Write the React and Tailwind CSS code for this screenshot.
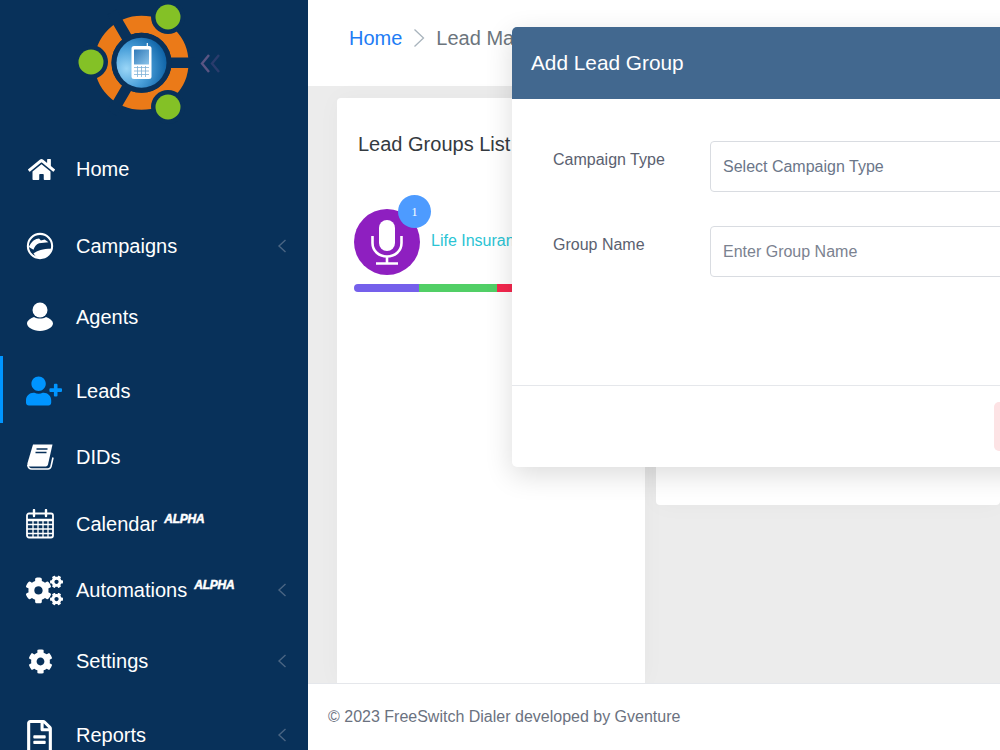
import React from "react";
import { FaHome, FaUserPlus, FaCogs, FaCog, FaRegFileAlt } from "react-icons/fa";

const Chevron = () => (
  <svg width="10" height="16" viewBox="0 0 10 16" className="absolute right-[21px] top-1/2 -translate-y-1/2" fill="none" stroke="#4a6583" strokeWidth="1.4">
    <path d="M8.500 2 2 8l6.500 6" />
  </svg>
);

const Alpha = () => (
  <span className="ml-[7px] -mt-[11px] text-[12px] leading-none font-bold italic tracking-[-0.2px] text-white [-webkit-text-stroke:0.5px_white]">ALPHA</span>
);

const Logo = () => (
  <svg width="160" height="135" viewBox="70 0 160 135" className="ml-[70px] block">
    <defs>
      <radialGradient id="ball" cx="20%" cy="62%" r="90%">
        <stop offset="0%" stopColor="#9ad6f7" />
        <stop offset="45%" stopColor="#4aa0da" />
        <stop offset="100%" stopColor="#03579c" />
      </radialGradient>
      <linearGradient id="screen" x1="0" y1="0" x2="1" y2="1">
        <stop offset="0%" stopColor="#2f79b8" />
        <stop offset="100%" stopColor="#8cc4ea" />
      </linearGradient>
    </defs>
    <circle cx="141.500" cy="62.700" r="38.500" fill="none" stroke="#eb7a18" strokeWidth="17" />
    <path d="M141.500 62.700H195M141.500 62.700 112 12M141.500 62.700 112 113" stroke="#08315a" strokeWidth="10.500" fill="none" />
    <circle cx="168" cy="17" r="17" fill="#08315a" />
    <circle cx="91" cy="62" r="17" fill="#08315a" />
    <circle cx="168" cy="107" r="17" fill="#08315a" />
    <circle cx="168" cy="17" r="12.500" fill="#84c126" />
    <circle cx="91" cy="62" r="12.500" fill="#84c126" />
    <circle cx="168" cy="107" r="12.500" fill="#84c126" />
    <circle cx="141.500" cy="62.700" r="30" fill="#08315a" />
    <circle cx="141.500" cy="62.700" r="25" fill="url(#ball)" />
    <path d="M147.300 47v-4" stroke="#fff" strokeWidth="1.200" />
    <rect x="131.500" y="46" width="20" height="33" rx="2.500" fill="#fff" />
    <rect x="134" y="49.500" width="15" height="15" rx="0.500" fill="url(#screen)" />
    <path d="M134 67.500h15M134 71h15M134 74.500h15M137.500 66v11M141.500 66v11M145.500 66v11" stroke="#7fb2d8" strokeWidth="0.800" />
    <path d="M209 55 202 63.500 209 72" fill="none" stroke="#5a5583" strokeWidth="2.400" />
    <path d="M219 55 212 63.500 219 72" fill="none" stroke="#2a3c6c" strokeWidth="2.400" />
  </svg>
);

const CampaignIcon = () => (
  <svg width="30" height="30" viewBox="0 0 30 30">
    <circle cx="15" cy="15" r="13" fill="#08315a" stroke="#fff" strokeWidth="2.200" />
    <path d="M3 16C6 10 10 7 14 7l2 2 4-1 4 3-10 1c-3 1-5 4-6 7Z" fill="#fff" />
    <path d="M8 23c4-3 10-5 19-5-1 6-6 10-12 10-3 0-5-2-7-5Z" fill="#fff" />
  </svg>
);

const AgentIcon = () => (
  <svg width="28" height="30" viewBox="0 0 28 30" fill="#fff">
    <circle cx="14" cy="8" r="7.500" />
    <path d="M1 21.500c0-3 4-5.500 7-6.500 3.500 2 8.500 2 12 0 3 1 7 3.500 7 6.500 0 3.500-6 7.500-13 7.500S1 25 1 21.500Z" />
  </svg>
);

const BookIcon = () => (
  <svg width="28" height="28" viewBox="0 0 28 28">
    <path d="M7 1.500h19.500L22 21.500c-.500 1.500-1.500 2-3 2H3.500C1.500 23.500 1 22 1.500 20L7 1.500Z" fill="#fff" />
    <path d="M1.800 22c.3 3 1.700 4 4 4H22c1.500 0 2.500-1 3-2.500l2-9" fill="none" stroke="#fff" strokeWidth="1.600" />
    <path d="M10.500 6h11M9.500 9.500h11" stroke="#08315a" strokeWidth="1.500" />
  </svg>
);

const CalendarIcon = () => (
  <svg width="28" height="30" viewBox="0 0 28 30" fill="none" stroke="#fff">
    <rect x="1" y="4.500" width="26" height="24" rx="2" strokeWidth="1.800" />
    <path d="M1 11h26" strokeWidth="2.500" />
    <path d="M1 15.500h26M1 20h26M1 24.500h26M7 11v17M12 11v17M17 11v17M22 11v17" strokeWidth="1.300" />
    <path d="M8 1v6M20 1v6" strokeWidth="2.400" strokeLinecap="round" />
  </svg>
);

const items = [
  { label: "Home", h: "h-[68px]", icon: <FaHome className="shrink-0 text-[27px] text-white ml-[3px]" /> },
  { label: "Campaigns", h: "h-[86px]", icon: <CampaignIcon />, arrow: true },
  { label: "Agents", h: "h-[56px]", icon: <AgentIcon /> },
  { label: "Leads", h: "h-[67px] mt-[11px] pt-[3px]", active: true, icon: <FaUserPlus className="shrink-0 text-[36px] text-[#0095ff] ml-[8px]" /> },
  { label: "DIDs", h: "h-[68px]", icon: <BookIcon /> },
  { label: "Calendar", h: "h-[66px]", icon: <CalendarIcon />, alpha: true },
  { label: "Automations", h: "h-[66px]", icon: <FaCogs className="shrink-0 text-[37px] text-white ml-[9px]" />, alpha: true, arrow: true },
  { label: "Settings", h: "h-[76px]", icon: <FaCog className="shrink-0 text-[25px] text-white ml-[1px]" />, arrow: true },
  { label: "Reports", h: "h-[72px]", icon: <FaRegFileAlt className="shrink-0 text-[33px] text-white -ml-[2px] mt-[3px]" />, arrow: true },
];

export default function App() {
  return (
    <div className="flex h-screen w-full overflow-hidden relative bg-white font-['Liberation_Sans',Arial,sans-serif]">
      <aside className="w-[308px] shrink-0 bg-[#08315a] h-full overflow-hidden">
        <Logo />
        <nav>
          {items.map((it) => (
            <div key={it.label} className={`relative flex items-center ${it.h} ${it.active ? "border-l-[3px] border-[#0095ff] pl-[23px]" : "pl-[26px]"}`}>
              <span className="w-[28px] h-[32px] flex items-center justify-center shrink-0">{it.icon}</span>
              <span className="ml-[22px] text-[20px] leading-none text-white">{it.label}</span>
              {it.alpha && <Alpha />}
              {it.arrow && <Chevron />}
            </div>
          ))}
        </nav>
      </aside>

      <main className="flex-1 min-w-0 flex flex-col h-full">
        <header className="h-[86px] shrink-0 bg-white flex items-center pl-[41px] pb-[10px] text-[20px] leading-none">
          <span className="text-[#1e7cf5]">Home</span>
          <svg width="14" height="20" viewBox="0 0 14 20" className="mx-[10px]" fill="none" stroke="#a9b4bd" strokeWidth="1.300">
            <path d="M2.500 1.500 11.500 10l-9 8.500" />
          </svg>
          <span className="text-[#6c757d]">Lead Management</span>
        </header>

        <section className="flex-1 min-h-0 bg-[#ececec] flex gap-[11px] pl-[29px] pt-[12px]">
          <div className="w-[308px] shrink-0 bg-white rounded-t-[4px] pt-[35px] overflow-hidden shadow-[0_0_24px_rgba(0,0,0,0.03)]">
            <h2 className="pl-[21px] text-[20px] leading-[23px] text-[#343a40] whitespace-nowrap">Lead Groups List</h2>
            <div className="relative mt-[53px] ml-[17px] flex items-center h-[66px]">
              <span className="w-[66px] h-[66px] rounded-full bg-[#8e1fc0] flex items-center justify-center">
                <svg width="32" height="45" viewBox="0 0 32 45" fill="none" stroke="#fff" strokeWidth="2.600">
                  <rect x="8" y="0" width="16" height="31" rx="8" fill="#fff" stroke="none" />
                  <path d="M1.500 16v7c0 8 6.500 13.500 14.500 13.500S30.500 31 30.500 23v-7M16 36.500v6M5 43.500h22" />
                </svg>
              </span>
              <span className="absolute -top-[14px] left-[44px] w-[33px] h-[33px] rounded-full bg-[#4d9bff] flex items-center justify-center text-white text-[12px] font-['Liberation_Serif',serif]">1</span>
              <span className="ml-[11px] -mt-[2px] text-[16px] text-[#2bc4d4] whitespace-nowrap">Life Insurance</span>
            </div>
            <div className="mt-[9px] ml-[17px] mr-[16px] h-[8px] flex rounded-l-full overflow-hidden">
              <span className="w-[65px] bg-[#7560eb]" />
              <span className="w-[78px] bg-[#51cf66]" />
              <span className="flex-1 bg-[#f5274e]" />
            </div>
          </div>
          <div className="flex-1 h-[407px] bg-white rounded-[4px] shadow-[0_0_24px_rgba(0,0,0,0.03)]" />
        </section>

        <footer className="h-[67px] shrink-0 bg-white border-t border-[#e5e7eb] flex items-center pl-[20px] text-[16px] text-[#6b7280]">
          © 2023 FreeSwitch Dialer developed by Gventure
        </footer>
      </main>

      <div className="absolute left-[512px] top-[27px] w-[600px] h-[440px] bg-white rounded-[5px] shadow-[0_8px_28px_rgba(0,0,0,0.14)] overflow-hidden flex flex-col">
        <div className="h-[72px] shrink-0 bg-[#42688f] flex items-center pl-[19px] text-[20.800px] leading-none text-white">Add Lead Group</div>
        <div className="h-[287px] shrink-0 pl-[41px] border-b border-[#e5e7eb]">
          <div className="flex pt-[42px]">
            <label className="w-[157px] shrink-0 text-[16px] leading-[18px] pt-[10px] text-[#5b6170]">Campaign Type</label>
            <div className="flex-1 h-[51px] border border-[#d9dce1] rounded-[4px] flex items-center pl-[12px] text-[16px] text-[#6b7689]">Select Campaign Type</div>
          </div>
          <div className="flex pt-[34px]">
            <label className="w-[157px] shrink-0 text-[16px] leading-[18px] pt-[10px] text-[#5b6170]">Group Name</label>
            <div className="flex-1 h-[51px] border border-[#d9dce1] rounded-[4px] flex items-center pl-[12px] text-[16px] text-[#7b8290]">Enter Group Name</div>
          </div>
        </div>
        <div className="flex-1 pl-[482px] pt-[16px]">
          <div className="w-[90px] h-[49px] rounded-[5px] bg-[#fde2e4]" />
        </div>
      </div>
    </div>
  );
}
